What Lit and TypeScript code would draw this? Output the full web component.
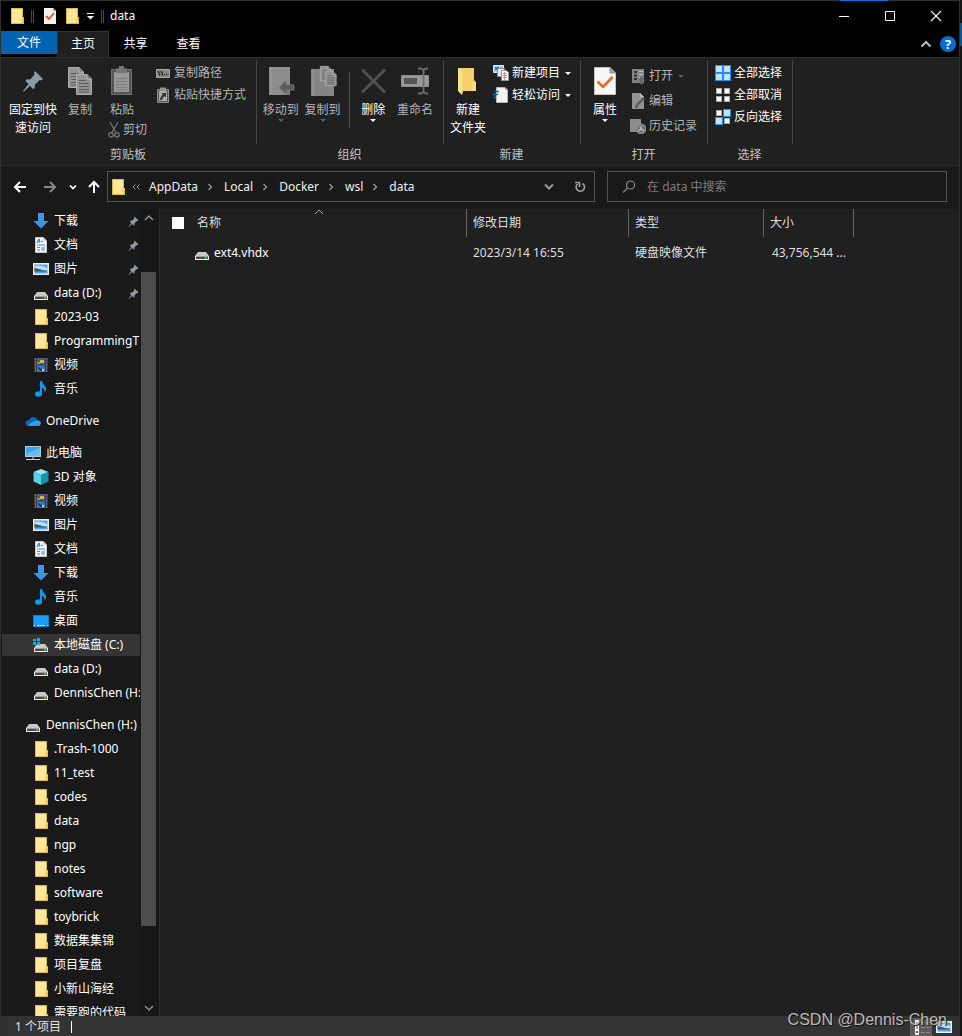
import { LitElement, html, css, svg, nothing, TemplateResult } from "lit";
import { customElement, property } from "lit/decorators.js";

/* ---------- icon artwork ---------- */

const page = (x: number, y: number) => svg`
  <g transform="translate(${x} ${y})">
    <path d="M.5.5H11L15.500 5V20.500H.5Z" fill="#949494" stroke="#adadad"/>
    <path d="M11 .5V5H15.500" fill="#777" stroke="#b8b8b8"/>
    <path d="M3 6.500H10M3 9.500H13M3 12.500H13M3 15.500H13M3 18H13" stroke="#5c5c5c"/>
  </g>`;

const drive = svg`
  <path d="M4 7H12L15 11H1Z" fill="#c9c9c9"/>
  <path d="M1 11H15V15H1Z" fill="#efefef"/>
  <path d="M2 11.500H14V14H2Z" fill="#4a4a4a"/>
  <path d="M11 12H13V13.500H11Z" fill="#3be04a"/>`;

const tile = (x: number, y: number, on: boolean) => on
  ? svg`<rect x=${x} y=${y} width="8" height="8" fill="#2a8ee0"/><rect x=${x + 1} y=${y + 1} width="6" height="6" fill="#bfe2fb"/>`
  : svg`<rect x=${x + 1} y=${y + 1} width="6" height="6" fill="#a8a8a8"/><rect x=${x + 2} y=${y + 2} width="4" height="4" fill="#fff"/>`;

const art: Record<string, [number, number, unknown]> = {
  folder: [16, 16, svg`
    <path d="M2 0H14V9H15V16H2Z" fill="#e0b847"/>
    <path d="M3 1H13V10L12 15H3Z" fill="#ffe699"/>
    <path d="M12 10H14V15H12Z" fill="#fbd667"/>`],
  check: [16, 16, svg`
    <path d="M2 0H11L14 3V16H2Z" fill="#f4f4f4"/>
    <path d="M11 0V3H14Z" fill="#9a9a9a"/>
    <path d="M4 8L7 11L12 5" fill="none" stroke="#e8501c" stroke-width="1.800"/>`],
  custom: [9, 8, svg`<path d="M1 1.500H8" stroke="#fff"/><path d="M1 4H8L4.500 7.500Z" fill="#fff"/>`],
  min: [12, 12, svg`<path d="M1 6.500H11" stroke="#fff"/>`],
  max: [12, 12, svg`<path d="M1.500 1.500H10.500V10.500H1.500Z" fill="none" stroke="#fff"/>`],
  close: [12, 12, svg`<path d="M1 1L11 11M11 1L1 11" stroke="#fff" stroke-width="1.100"/>`],
  collapse: [12, 8, svg`<path d="M1.500 6.500L6 2L10.500 6.500" fill="none" stroke="#b9b9b9" stroke-width="2"/>`],
  pin: [22, 22, svg`
    <g fill="#8f9aa3"><path d="M13 1L21 9L19 10.500L17.500 10L13 14.500L12.500 18.500L11 19L3.500 11L4.500 9.500L8.500 9.200L12.500 4.500L12 2.500Z"/>
    <path d="M7 13.500L8.700 15.200L2 21.500L.8 21.200Z"/></g>`],
  copy: [26, 30, svg`${page(1, 1)}${page(9, 8)}`],
  paste: [24, 30, svg`
    <path d="M1.500 3.500H21.500V28.500H1.500Z" fill="#555" stroke="#6c6c6c"/>
    <path d="M4 6H19V26H4Z" fill="#989898"/>
    <path d="M6 2.500H17V7H6Z" fill="#777"/><path d="M9 0H14V3H9Z" fill="#777"/>
    <path d="M6 12.500H17M6 15.500H17M6 18.500H17M6 21.500H17M6 24H17" stroke="#7e7e7e"/>`],
  cut: [12, 16, svg`
    <g fill="none" stroke="#757575" stroke-width="1.300"><path d="M2 0L8 10.500M10 0L4 10.500"/>
    <circle cx="3" cy="12.800" r="2.200"/><circle cx="9" cy="12.800" r="2.200"/></g>`],
  path: [16, 16, svg`
    <path d="M1.500 4.500H14.500V12.500H1.500Z" fill="#868686" stroke="#a5a5a5"/>
    <path d="M3 6L5 10.500M6 6L8 10.500" stroke="#222" stroke-width="1.200"/><path d="M9 9.500H10.200M11 9.500H12M12.800 9.500H13.600" stroke="#222"/>`],
  shortcut: [16, 16, svg`
    <path d="M2.500 2.500H13.500V15.500H2.500Z" fill="#555" stroke="#8f8f8f"/><path d="M4 4H12V14H4Z" fill="#aaa"/>
    <path d="M5 .500H11V4H5Z" fill="#8f8f8f"/>
    <path d="M6.500 6H11V10.500L9.500 9Q7 11 7 13H5Q5 9.500 8 7.500Z" fill="#333"/>`],
  move: [28, 30, svg`
    <path d="M2 1H23V29H2Z" fill="#8d8d8d"/><path d="M21 21L23 29H18Z" fill="#777"/>
    <path d="M4 1V29" stroke="#9d9d9d"/>
    <path d="M12 21.500L19 15V19H27V24H19V28Z" fill="#5b5b5b" stroke="#737373"/>`],
  copyto: [28, 32, svg`
    <path d="M2 4H25V31H2Z" fill="#858585"/><path d="M4 4V31" stroke="#9a9a9a"/>
    <g transform="translate(11 1) scale(.72)">${page(0, 0)}${page(7, 7)}</g>`],
  del: [28, 28, svg`<path d="M3 2.500L26 25.500M26 2.500L3 25.500" stroke="#505050" stroke-width="3"/>`],
  rename: [30, 28, svg`
    <path d="M1.500 8.500H28.500V19.500H1.500Z" fill="#999" stroke="#8c8c8c"/><path d="M4 11H17V17H4Z" fill="#555"/>
    <path d="M18 1.500H21L23.500 3L26 1.500H28M23.500 3V25M18 26.500H21L23.500 25L26 26.500H28" fill="none" stroke="#6e6e6e" stroke-width="1.800"/>`],
  newfolder: [22, 32, svg`
    <path d="M1 3H17V15L19 17V26H1Z" fill="#f5d068"/>
    <path d="M15 17H19V26H14Z" fill="#fbdc80"/>
    <path d="M1 3L6 7V26L5 30L1 26Z" fill="#ffe08a"/>`],
  newitem: [16, 16, svg`
    <path d="M.500.500H10.500V7.500H.500Z" fill="#9bd0f5" stroke="#e6e6e6"/><path d="M2 2H6V5H2Z" fill="#2178be"/>
    <path d="M4.500 3.500H11.500V11.500H4.500Z" fill="#e8e8e8" stroke="#8b8b8b"/>
    <path d="M8.500 5.500H13.500L15.500 7.500V15.500H8.500Z" fill="#fff" stroke="#999"/>
    <path d="M10 8.500H14M10 10.500H14M10 12.500H14" stroke="#7aa6d4"/><path d="M11.500 7V15" stroke="#e48d8d"/>`],
  easy: [16, 16, svg`
    <path d="M3.500.500H12L14.500 3V15.500H3.500Z" fill="#f4f4f4" stroke="#b5b5b5"/><path d="M12 .500V3H14.500Z" fill="#aaa"/>
    <path d="M2 4.500H6M0 7.500H5M1 10.500H3" stroke="#1a6fb8" stroke-width="1.400"/>`],
  props: [22, 30, svg`
    <path d="M.500 1.500H16L21.500 7V28.500H.500Z" fill="#f7f7f7" stroke="#c4c4c4"/><path d="M16 1.500V7H21.500Z" fill="#aaa" stroke="#8a8a8a"/>
    <path d="M3.500 15.500L9 21L18.500 11" fill="none" stroke="#f26522" stroke-width="2.600"/>`],
  open: [16, 16, svg`
    <path d="M2 1H14V15H2Z" fill="#858585"/><path d="M4 3H7V5H4ZM4 6.500H7V8.500H4ZM4 10H7V12H4Z" fill="#333"/>
    <path d="M9 3.500H13M9 6.500H13M9 9.500H10" stroke="#c4c4c4"/><path d="M8 12.500L11.500 8.500L15 12.500H13V16H10V12.500Z" fill="#666"/>`],
  edit: [16, 16, svg`
    <path d="M2 0H10L14 4V16H2Z" fill="#919191"/><path d="M10 0V4H14Z" fill="#c0c0c0"/>
    <path d="M14 5L7 12L6 15" fill="none" stroke="#5c5c5c" stroke-width="2.400"/>`],
  history: [16, 16, svg`
    <path d="M0 1H11V14H0Z" fill="#8b8b8b"/><circle cx="11" cy="11" r="5" fill="#777" stroke="#999"/>
    <path d="M11 8V11L8 13M11 11L14 13" fill="none" stroke="#d0d0d0"/>`],
  all: [16, 16, svg`${tile(0, 0, true)}${tile(8, 0, true)}${tile(0, 8, true)}${tile(8, 8, true)}`],
  none: [16, 16, svg`${tile(0, 0, false)}${tile(8, 0, false)}${tile(0, 8, false)}${tile(8, 8, false)}`],
  invert: [16, 16, svg`${tile(0, 0, false)}${tile(8, 0, true)}${tile(0, 8, true)}${tile(8, 8, false)}`],
  back: [14, 14, svg`<path d="M13 7H2M7 2L2 7L7 12" fill="none" stroke="#fff" stroke-width="2"/>`],
  forward: [14, 14, svg`<path d="M1 7H12M7 2L12 7L7 12" fill="none" stroke="#8a8a8a" stroke-width="2"/>`],
  recent: [8, 8, svg`<path d="M1 2.500L4 5.500L7 2.500" fill="none" stroke="#fff" stroke-width="1.700"/>`],
  up: [14, 14, svg`<path d="M7 13V2M2 7L7 2L12 7" fill="none" stroke="#fff" stroke-width="2"/>`],
  dbl: [8, 8, svg`<path d="M3.500 1.500L1 4L3.500 6.500M7.500 1.500L5 4L7.500 6.500" fill="none" stroke="#a0a0a0"/>`],
  chev: [6, 8, svg`<path d="M1.500 1L4.500 4L1.500 7" fill="none" stroke="#a0a0a0" stroke-width="1.200"/>`],
  drop: [12, 8, svg`<path d="M2 1.500L6 5.500L10 1.500" fill="none" stroke="#9a9a9a" stroke-width="2"/>`],
  refresh: [12, 14, svg`<path d="M8.500 3.500A4.200 4.200 0 1 1 3.500 4" fill="none" stroke="#9a9a9a" stroke-width="1.700"/><path d="M1 2.500H5.500V7" fill="none" stroke="#9a9a9a" stroke-width="1.700"/>`],
  search: [14, 14, svg`<circle cx="8.500" cy="5" r="4" fill="none" stroke="#8a8a8a" stroke-width="1.200"/><path d="M5.500 8L1 12.500" stroke="#8a8a8a" stroke-width="1.200"/>`],
  download: [16, 16, svg`<path d="M5 0H11V8H15.500L8 15.500L.500 8H5Z" fill="#3a96e8"/>`],
  docs: [16, 16, svg`
    <path d="M2.500.500H10.500L13.500 3.500V15.500H2.500Z" fill="#f7f7f7" stroke="#c9c9c9"/><path d="M10.500.500V3.500H13.500Z" fill="#b5b5b5"/>
    <path d="M4 6L5.500 2.500H6.500V6M8 4.500H10M4 8H12M8 11H12M8 13H12M4 10.500H7M4 13H7" fill="none" stroke="#2a8fd6" stroke-width="1.200"/>`],
  pics: [16, 16, svg`
    <path d="M0 2H16V14H0Z" fill="#ededed"/><path d="M1.500 3.500H14.500V12.500H1.500Z" fill="#58a2e4"/>
    <path d="M1.500 5Q7 3.500 14.500 7V9H1.500Z" fill="#bfdef5"/><path d="M1.500 7Q7 8 14.500 10.500H1.500Z" fill="#2f5f57"/>`],
  drive: [16, 16, drive],
  sysdrive: [16, 16, svg`${drive}<path d="M0 2H3V4H0ZM4 1H7V4H4ZM0 5H3V8H0ZM4 5H7V8H4Z" fill="#00b4f0"/>`],
  video: [16, 16, svg`
    <path d="M1 1H15V15H1Z" fill="#3d3d3d"/><path d="M4 1H12V7.500H4Z" fill="#3c5ca6"/><path d="M4 8.500H12V15H4Z" fill="#3579d1"/>
    <path d="M7 3H11V6H7Z" fill="#d8b72c"/><path d="M4 5H7V7H4Z" fill="#7fa33b"/><path d="M5 10L7 11L10 13V14H8L5 11.500Z" fill="#1d2c55"/><path d="M9 12H11V14H9Z" fill="#e2cf5a"/>
    <path d="M2.500 1.500V15M13.500 1.500V15" stroke="#a8a8a8" stroke-dasharray="1 2"/>`],
  music: [16, 16, svg`<ellipse cx="5.500" cy="13" rx="3.500" ry="2.700" fill="#0f97f5"/><path d="M7 0H9Q9.500 3 12 5Q14.500 8 11.500 11.500Q12 8 9 6.500V13H7Z" fill="#0f97f5"/>`],
  cloud: [16, 16, svg`
    <path d="M3.500 13Q0 12.500 .300 9.500Q1 7 4 7Q5.500 3.500 9 4Q12 4.500 12.500 7.500Q16 7.800 15.800 10.500Q15.500 13 13 13Z" fill="#0b64b8"/>
    <path d="M3 13Q5 9 9 8.500Q11 7 13 7.600Q16 8 15.800 10.500Q15.500 13 13 13Z" fill="#28a0ea"/>`],
  pc: [16, 16, svg`
    <path d="M0 1H16V12H0Z" fill="#b9c9d2"/><path d="M1 2H15V11H1Z" fill="#3ea4ee"/><path d="M1 9L15 3V11H1Z" fill="#63c0f7"/>
    <path d="M7 12H9V14H7Z" fill="#777"/><path d="M1 14.500H15" stroke="#cfd6da"/>`],
  cube: [16, 16, svg`
    <path d="M8 0L15.500 3L8 6L.500 3Z" fill="#9ae6f2"/><path d="M.500 3L8 6V16L.500 12.500Z" fill="#5cd0e2"/><path d="M8 6L15.500 3V12.500L8 16Z" fill="#1793ad"/>`],
  desktop: [16, 16, svg`<path d="M0 2H16V14H0Z" fill="#0a7fd4"/><path d="M1 3H15V12H1Z" fill="#1b9bf5"/><path d="M1 12.500H2M4 12.500H12M14 12.500H15" stroke="#cfe9fb"/>`],
  caretup: [10, 8, svg`<path d="M1 6L5 2L9 6" fill="none" stroke="#8f8f8f" stroke-width="1.500"/>`],
  caretdown: [10, 8, svg`<path d="M1 2L5 6L9 2" fill="none" stroke="#8f8f8f" stroke-width="1.500"/>`],
  sort: [10, 6, svg`<path d="M1 5L5 1L9 5" fill="none" stroke="#a8a8a8"/>`],
  details: [22, 18, svg`
    <path d="M5 2H9V17H5Z" fill="#eee"/><path d="M6 4H8V6H6ZM6 8.500H8V10.500H6Z" fill="#888"/><path d="M6 13H8V15H6Z" fill="#b0473f"/>
    <path d="M11 4.500H15M16 4.500H20M11 9.500H15M16 9.500H20M11 14.500H15M16 14.500H20" stroke="#8a8a8a"/>`],
};

const icon = (name: string, width?: number): TemplateResult => {
  const [w, h, body] = art[name];
  const k = width ? width / w : 1;
  return html`<svg class="icon" aria-hidden="true" width=${w * k} height=${h * k} viewBox="0 0 ${w} ${h}">${body}</svg>`;
};

const base = css`
  * { box-sizing: border-box; }
  button, input { font: inherit; color: inherit; }
  button { background: none; border: 0; padding: 0; }
  .icon { display: block; flex: none; }
`;

/* ---------- ribbon ---------- */

@customElement("ribbon-button")
class RibbonButton extends LitElement {
  @property() icon = "";
  @property() label = "";
  @property() second = "";
  @property() arrow = "";
  @property({ type: Boolean }) small = false;
  @property({ type: Boolean }) dim = false;

  static styles = [base, css`
    :host { display: block; }
    button { color: #fff; line-height: 18px; white-space: nowrap; }
    .dim { color: #b4b4b4; }
    .large { width: 100%; display: flex; flex-direction: column; align-items: center; }
    .art { height: 36px; padding-bottom: 4px; display: flex; align-items: center; }
    .small { display: flex; align-items: center; gap: 3px; height: 22px; }
    .tri { border: 3px solid transparent; border-top-color: #fff; border-bottom: 0; }
    .dim .tri { border-top-color: #5c5c5c; }
    .small .tri { margin-left: 2px; }
  `];

  render() {
    const cls = `${this.small ? "small" : "large"} ${this.dim ? "dim" : ""}`;
    const tri = this.arrow ? html`<span class="tri"></span>` : nothing;
    return html`<button class=${cls}>
      ${this.small ? icon(this.icon) : html`<span class="art">${icon(this.icon)}</span>`}
      <span>${this.label}</span>${this.second ? html`<span>${this.second}</span>` : nothing}${tri}
    </button>`;
  }
}

const big = (i: string, label: string, dim = false, arrow = "", second = "") =>
  html`<ribbon-button icon=${i} label=${label} second=${second} arrow=${arrow} ?dim=${dim}></ribbon-button>`;
const small = (i: string, label: string, dim = false, arrow = "") =>
  html`<ribbon-button small icon=${i} label=${label} arrow=${arrow} ?dim=${dim}></ribbon-button>`;

/* ---------- navigation data ---------- */

interface Node { icon: string; label: string; pin?: boolean; selected?: boolean; }
const n = (i: string, label: string, extra: Partial<Node> = {}): Node => ({ icon: i, label, ...extra });

const quick: Node[] = [
  n("download", "下载", { pin: true }), n("docs", "文档", { pin: true }), n("pics", "图片", { pin: true }),
  n("drive", "data (D:)", { pin: true }), n("folder", "2023-03"), n("folder", "ProgrammingT"),
  n("video", "视频"), n("music", "音乐"),
];
const computer: Node[] = [
  n("cube", "3D 对象"), n("video", "视频"), n("pics", "图片"), n("docs", "文档"), n("download", "下载"),
  n("music", "音乐"), n("desktop", "桌面"), n("sysdrive", "本地磁盘 (C:)", { selected: true }),
  n("drive", "data (D:)"), n("drive", "DennisChen (H:)"),
];
const external: Node[] = [
  ".Trash-1000", "11_test", "codes", "data", "ngp", "notes", "software", "toybrick",
  "数据集集锦", "项目复盘", "小新山海经", "需要跑的代码",
].map((label) => n("folder", label));

@customElement("app-root")
class AppRoot extends LitElement {
  static styles = [base, css`
    :host {
      display: grid; grid-template-columns: minmax(0, 1fr) 2px; position: relative;
      height: 100vh; overflow: hidden; background: #141414; color: #fff;
      font: 12px/18px "Noto Sans", "Noto Sans CJK SC", sans-serif;
    }
    .window {
      display: grid; grid-template-rows: 30px 26px 109px 43px minmax(0, 1fr) 20px;
      min-width: 0; height: 100vh; border: solid #303030; border-width: 1px 1px 0; background: #191919;
    }
    .backdrop-top { position: absolute; top: 0; right: 74px; width: 48px; height: 1px; background: #0a74d1; }
    .backdrop-side { margin-top: 23px; height: 23px; background: #0a5596; }

    .title { display: flex; align-items: center; background: #000; padding-left: 8px; }
    .title .quick { display: flex; align-items: center; gap: 6px; }
    .grip { width: 3px; height: 13px; border: solid #4a4a4a; border-width: 0 1px; margin-right: 2px; }
    .title h1 { font: inherit; margin: 0 auto 0 4px; }
    .title .sys { width: 46px; height: 30px; display: grid; place-items: center; }

    .tabs { display: flex; background: #000; }
    .tabs button { width: 53px; padding-bottom: 1px; border: 1px solid transparent; border-bottom: 0; }
    .tabs .file { width: 56px; background: #0063b1; height: 23px; padding: 0; }
    .tabs .active { width: 52px; background: #202020; border-color: #333; }
    .help { margin-left: auto; display: flex; align-items: center; gap: 8px; padding-right: 3px; }
    .tabs .help button { width: auto; padding: 0; border: 0; }
    .tabs .help .mark { width: 16px; height: 16px; border-radius: 8px; background: #0a6ccc; font: bold 13px/16px "Open Sans", sans-serif; }

    .ribbon { display: flex; background: #202020; border: solid #2e2e2e; border-width: 1px 0; }
    .group { display: flex; flex-direction: column; flex: none; background: linear-gradient(#464646, #464646) right 2px / 1px 84px no-repeat; }
    .tools { display: flex; height: 88px; padding: 0 8px 0 4px; }
    .g-org .tools { padding-left: 3px; }
    .caption { text-align: center; color: #c2c2c2; height: 18px; padding-right: 2px; }
    .g-clip { width: 256px; } .g-org { width: 187px; } .g-new { width: 137px; } .g-open { width: 127px; } .g-sel { width: 85px; }
    .b36 { width: 38px; } .b40 { width: 40px; } .b42 { width: 42px; } .b46 { width: 46px; } .b56 { width: 56px; }
    .large { padding-top: 7px; }
    .stack { padding: 4px 0 0 3px; }
    .wide { padding: 4px 0 0 5px; }
    .loose { display: grid; gap: 3px; align-content: start; padding: 7px 0 0 5px; }
    .pasting { width: 53px; }
    .cutting { padding-left: 9px; }
    .rule { width: 1px; height: 56px; background: #4f4f4f; margin: 14px 3px 0 5px; }

    .nav { display: grid; grid-template-columns: auto minmax(0, 10fr) minmax(0, 7fr); align-items: center; padding: 0 12px 2px; }
    .arrows { display: flex; align-items: center; }
    .arrows button { padding: 4px 0; }
    .arrows button:nth-child(2) { margin-left: 16px; }
    .arrows button:nth-child(3) { margin-left: 12px; }
    .arrows button:nth-child(4) { margin: 0 6px 0 10px; }
    .address, .search { display: flex; align-items: center; height: 31px; border: 1px solid #535353; min-width: 0; }
    .address { padding-left: 2px; margin-right: 6px; }
    .search { padding-left: 14px; gap: 11px; margin-left: 6px; }
    .crumbs { display: flex; align-items: center; gap: 9px; margin: 0 auto 0 6px; padding: 0; list-style: none; }
    .crumbs li { display: flex; align-items: center; gap: 11px; }
    .crumbs a { color: #f0f0f0; text-decoration: none; }
    .address button { height: 29px; display: grid; place-items: center; }
    .address .down { width: 33px; }
    .address .again { width: 29px; }
    .search input { flex: 1; min-width: 0; background: none; border: 0; outline: 0; padding: 0; }
    .search input::placeholder { color: #7d7d7d; opacity: 1; }

    .body { display: grid; grid-template-columns: 159px minmax(0, 1fr); min-height: 0; }
    .side { display: grid; grid-template-columns: 139px 19px; border-right: 1px solid #2b2b2b; min-height: 0; }
    .tree { overflow: hidden; min-height: 0; display: flex; flex-direction: column; gap: 2px; padding-top: 1px; }
    .tree ul { list-style: none; margin: 0 0 8px; padding: 0; display: grid; gap: 2px; flex: none; }
    .node { display: flex; flex: none; align-items: center; gap: 5px; height: 22px; margin: 0 1px; padding: 0 2px 0 31px; white-space: nowrap; color: #fff; text-decoration: none; }
    .root { padding-left: 23px; }
    .alone { margin-bottom: 8px; }
    .selected { background: #353535; }
    .node .pin { margin-left: auto; }
    .bar { display: grid; grid-template-rows: 18px 45px 1fr 90px; justify-items: center; align-items: center; padding-right: 2px; background: #171717; }
    .thumb { grid-row: 3; width: 15px; height: 100%; background: #4d4d4d; }
    .bar .less { grid-row: 1; } .bar .more { grid-row: 4; align-self: end; padding-bottom: 4px; }

    .list { background: #202020; min-width: 0; overflow: hidden; }
    table { border-collapse: separate; border-spacing: 0; table-layout: fixed; width: 694px; color: #dedede; }
    th { font-weight: normal; text-align: left; height: 28px; padding: 0 6px; border-right: 1px solid #636363; position: relative; }
    td { height: 22px; padding: 0 6px; white-space: nowrap; overflow: hidden; }
    tbody::before { content: ""; display: block; height: 5px; }
    .c-name { width: 307px; } .c-date { width: 162px; } .c-type { width: 135px; } .c-size { width: 90px; }
    th.name { padding-left: 12px; }
    .pick { display: flex; align-items: center; gap: 13px; }
    .pick input { appearance: none; width: 12px; height: 12px; margin: 0; background: #fff; }
    .sorted { position: absolute; left: 154px; top: 0; }
    .entry { display: flex; align-items: center; gap: 4px; padding-left: 28px; color: #fff; }
    .number { text-align: right; padding-right: 8px; }

    .status { display: flex; align-items: center; background: #333; padding: 2px 7px 0 14px; color: #e0e0e0; }
    .mark-end { width: 1px; height: 12px; background: #fff; margin: 0 auto 0 10px; }
    .views { display: flex; align-items: center; gap: 4px; }
    .views .on { background: #5c5c5c; }
    .credit { position: absolute; right: 15px; bottom: 6px; font: 16px/20px "Liberation Sans", sans-serif; color: #b9b9b9; text-shadow: 1px 1px 1px #111; }
  `];

  private node(item: Node) {
    return html`<li><a href="#" class="node ${item.selected ? "selected" : ""}">
      ${icon(item.icon)}<span>${item.label}</span>
      ${item.pin ? html`<span class="pin">${icon("pin", 11)}</span>` : nothing}
    </a></li>`;
  }

  render() {
    return html`
      <div class="window">
        <header class="title">
          <div class="quick">
            ${icon("folder")}<span class="grip"></span>
            <button aria-label="属性">${icon("check")}</button>
            <button aria-label="新建文件夹">${icon("folder")}</button>
            <button aria-label="自定义">${icon("custom")}</button><span class="grip"></span>
          </div>
          <h1>data</h1>
          <button class="sys" aria-label="最小化">${icon("min")}</button>
          <button class="sys" aria-label="最大化">${icon("max")}</button>
          <button class="sys" aria-label="关闭">${icon("close")}</button>
        </header>

        <nav class="tabs">
          <button class="file">文件</button><button class="active">主页</button>
          <button>共享</button><button>查看</button>
          <div class="help">
            <button aria-label="折叠">${icon("collapse")}</button>
            <button class="mark" aria-label="帮助">?</button>
          </div>
        </nav>

        <section class="ribbon">
          <div class="group g-clip">
            <div class="tools">
              <div class="large b56">${big("pin", "固定到快", false, "", "速访问")}</div>
              <div class="large b36">${big("copy", "复制", true)}</div>
              <div class="pasting">
                <div class="large b46">${big("paste", "粘贴", true)}</div>
                <div class="cutting">${small("cut", "剪切", true)}</div>
              </div>
              <div class="stack">${small("path", "复制路径", true)}${small("shortcut", "粘贴快捷方式", true)}</div>
            </div>
            <div class="caption">剪贴板</div>
          </div>
          <div class="group g-org">
            <div class="tools">
              <div class="large b42">${big("move", "移动到", true, "y")}</div>
              <div class="large b42">${big("copyto", "复制到", true, "y")}</div>
              <div class="rule"></div>
              <div class="large b42">${big("del", "删除", false, "y")}</div>
              <div class="large b42">${big("rename", "重命名", true)}</div>
            </div>
            <div class="caption">组织</div>
          </div>
          <div class="group g-new">
            <div class="tools">
              <div class="large b40">${big("newfolder", "新建", false, "", "文件夹")}</div>
              <div class="wide">${small("newitem", "新建项目", false, "y")}${small("easy", "轻松访问", false, "y")}</div>
            </div>
            <div class="caption">新建</div>
          </div>
          <div class="group g-open">
            <div class="tools">
              <div class="large b40">${big("props", "属性", false, "y")}</div>
              <div class="loose">${small("open", "打开", true, "y")}${small("edit", "编辑", true)}${small("history", "历史记录", true)}</div>
            </div>
            <div class="caption">打开</div>
          </div>
          <div class="group g-sel">
            <div class="tools">
              <div class="stack">${small("all", "全部选择")}${small("none", "全部取消")}${small("invert", "反向选择")}</div>
            </div>
            <div class="caption">选择</div>
          </div>
        </section>

        <div class="nav">
          <div class="arrows">
            <button aria-label="后退">${icon("back")}</button>
            <button aria-label="前进">${icon("forward")}</button>
            <button aria-label="最近">${icon("recent")}</button>
            <button aria-label="向上">${icon("up")}</button>
          </div>
          <div class="address">
            ${icon("folder")}
            <ol class="crumbs">
              <li>${icon("dbl")}</li>
              ${["AppData", "Local", "Docker", "wsl", "data"].map((c, i) =>
                html`<li>${i ? icon("chev") : nothing}<a href="#">${c}</a></li>`)}
            </ol>
            <button class="down" aria-label="历史">${icon("drop")}</button>
            <button class="again" aria-label="刷新">${icon("refresh")}</button>
          </div>
          <label class="search">${icon("search")}<input type="text" aria-label="搜索" placeholder="在 data 中搜索" /></label>
        </div>

        <main class="body">
          <aside class="side">
            <div class="tree">
              <ul>${quick.map((i) => this.node(i))}</ul>
              <a href="#" class="node root alone">${icon("cloud")}<span>OneDrive</span></a>
              <a href="#" class="node root">${icon("pc")}<span>此电脑</span></a>
              <ul>${computer.map((i) => this.node(i))}</ul>
              <a href="#" class="node root">${icon("drive")}<span>DennisChen (H:)</span></a>
              <ul>${external.map((i) => this.node(i))}</ul>
            </div>
            <div class="bar">
              <span class="less">${icon("caretup")}</span>
              <div class="thumb"></div>
              <span class="more">${icon("caretdown")}</span>
            </div>
          </aside>
          <section class="list">
            <table>
              <colgroup><col class="c-name" /><col class="c-date" /><col class="c-type" /><col class="c-size" /></colgroup>
              <thead><tr>
                <th class="name"><label class="pick"><input type="checkbox" />名称</label><span class="sorted">${icon("sort")}</span></th>
                <th>修改日期</th><th>类型</th><th>大小</th>
              </tr></thead>
              <tbody><tr>
                <td><span class="entry">${icon("drive")}ext4.vhdx</span></td>
                <td>2023/3/14 16:55</td><td>硬盘映像文件</td><td class="number">43,756,544 ...</td>
              </tr></tbody>
            </table>
          </section>
        </main>

        <footer class="status">
          <span>1 个项目</span><span class="mark-end"></span>
          <div class="views">
            <button class="on" aria-label="详细信息">${icon("details")}</button>
            <button aria-label="缩略图">${icon("pics")}</button>
          </div>
        </footer>
      </div>
      <div class="backdrop-side"></div>
      <div class="backdrop-top"></div>
      <div class="credit">CSDN @Dennis-Chen</div>`;
  }
}
